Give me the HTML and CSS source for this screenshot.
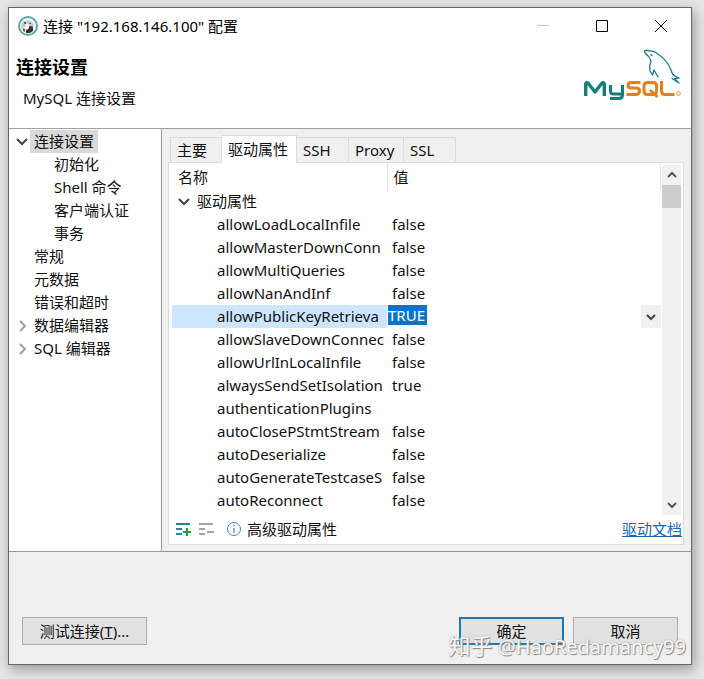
FILE: index.html
```html
<!DOCTYPE html>
<html lang="zh-CN">
<head>
<meta charset="utf-8">
<title>连接 "192.168.146.100" 配置</title>
<link rel="stylesheet" href="styles.css">
</head>
<body>
<div class="window">
  <header class="head">
    <div class="titlebar">
      <svg class="app-icon" viewBox="0 0 20 20" aria-hidden="true">
        <circle cx="10" cy="10" r="9" fill="#f4f7f6" stroke="#5fa9ac" stroke-width="2"/>
        <path d="M4 7l2-2 2 0 3-1 3 2 2 3-1 3-2-2-3 0-2 2-3-1-1 3-1-3z" fill="#c6cccb"/>
        <path d="M9 11l4-1 2 1 0 4-3 2-4 0 0-3z" fill="#3b302c"/>
        <path d="M6 6l2 0 0 2-2 0zM11 7l2 0 0 1-2 0zM5 12l2 1 0 3-2-1z" fill="#6b6462"/>
        <path d="M8 8l3 0 0 4-2 2-2-2z" fill="#fff"/>
      </svg>
      <span class="title">连接 "192.168.146.100" 配置</span>
      <button class="winbtn" aria-label="最小化" disabled><svg viewBox="0 0 14 14"><path d="M1 6.500h12" stroke="#c4c4c4"/></svg></button>
      <button class="winbtn" aria-label="最大化"><svg viewBox="0 0 14 14"><path d="M1.500 1.500h11v11h-11z" stroke="#000"/></svg></button>
      <button class="winbtn" aria-label="关闭"><svg viewBox="0 0 14 14"><path d="M1 1l12 12M13 1L1 13" stroke="#000"/></svg></button>
    </div>
    <div class="banner">
      <div>
        <h1>连接设置</h1>
        <p>MySQL 连接设置</p>
      </div>
      <svg class="logo" viewBox="0 0 100 54" role="img" aria-label="MySQL">
        <g fill="none" stroke="#1d7c82" stroke-width="1.300" stroke-linejoin="round" stroke-linecap="round">
          <path d="M64 7Q61 4 61.500 3Q63 1.500 66 3Q71 2.500 75 6Q81 10 85 16Q88 21 89.500 26Q92 28.500 96 30L91.500 30.500L96 35L89 30.500"/>
          <path d="M64 7Q67 9 68 13Q66 18 67 23L69.500 27L71 22L75 29"/>
          <path d="M68 6.500l1 1"/>
        </g>
        <g fill="none" stroke="#128078" stroke-width="3.400" stroke-linejoin="round">
          <path d="M2.700 48V36Q3 34 5 35L12 44L19 35Q21 34 21.300 36V48"/>
          <path d="M27.500 37V43Q27.500 46 30.500 46H39M39.500 37V47Q39.500 50.500 36 50.500H27" stroke-width="3"/>
        </g>
        <g fill="none" stroke="#e57f1b" stroke-width="3" stroke-linejoin="round">
          <path d="M57.500 34.500H48Q45 34.500 45 37.500Q45 40 48 40H53.500Q56.500 40 56.500 43T53.500 46.500H43.500"/>
          <path d="M64 34.500H70Q73.500 34.500 73.500 38V43Q73.500 46.500 70 46.500H64.500Q61 46.500 61 43V38Q61 34.500 64.500 34.500M67 42L74.500 49"/>
          <path d="M78.500 33V43Q78.500 46.500 82 46.500H91.500"/>
        </g>
        <circle cx="95.500" cy="45.500" r="1.900" fill="none" stroke="#e59a50" stroke-width="1"/>
      </svg>
    </div>
  </header>

  <main class="main">
    <nav class="nav" aria-label="连接设置">
      <ul class="tree">
        <li>
          <a href="#" class="node current"><svg class="twisty" viewBox="0 0 12 12"><path d="M1 3l5 5 5-5" stroke="#444"/></svg><span>连接设置</span></a>
          <ul>
            <li><a href="#" class="node"><span>初始化</span></a></li>
            <li><a href="#" class="node"><span>Shell 命令</span></a></li>
            <li><a href="#" class="node"><span>客户端认证</span></a></li>
            <li><a href="#" class="node"><span>事务</span></a></li>
          </ul>
        </li>
        <li><a href="#" class="node"><i class="twisty"></i><span>常规</span></a></li>
        <li><a href="#" class="node"><i class="twisty"></i><span>元数据</span></a></li>
        <li><a href="#" class="node"><i class="twisty"></i><span>错误和超时</span></a></li>
        <li><a href="#" class="node"><svg class="twisty" viewBox="0 0 12 12"><path d="M4 1l5 5-5 5" stroke="#a0a0a0"/></svg><span>数据编辑器</span></a></li>
        <li><a href="#" class="node"><svg class="twisty" viewBox="0 0 12 12"><path d="M4 1l5 5-5 5" stroke="#a0a0a0"/></svg><span>SQL 编辑器</span></a></li>
      </ul>
    </nav>

    <section class="content">
      <div class="tabs" role="tablist">
        <button class="tab" role="tab">主要</button>
        <button class="tab selected" role="tab" aria-selected="true">驱动属性</button>
        <button class="tab" role="tab">SSH</button>
        <button class="tab wide" role="tab">Proxy</button>
        <button class="tab" role="tab">SSL</button>
      </div>
      <div class="panel">
        <div class="grid-area">
          <table class="props">
            <colgroup><col class="col-name"><col></colgroup>
            <thead><tr><th>名称</th><th>值</th></tr></thead>
            <tbody>
              <tr class="group"><td colspan="2"><div class="group-label"><svg class="twisty" viewBox="0 0 12 12"><path d="M1 3l5 5 5-5" stroke="#444"/></svg>驱动属性</div></td></tr>
              <tr><td>allowLoadLocalInfile</td><td>false</td></tr>
              <tr><td>allowMasterDownConn</td><td>false</td></tr>
              <tr><td>allowMultiQueries</td><td>false</td></tr>
              <tr><td>allowNanAndInf</td><td>false</td></tr>
              <tr class="active"><td><label for="prop-value">allowPublicKeyRetrieva</label></td><td><div class="editor"><input id="prop-value" value="TRUE"><button class="drop" aria-label="展开"><svg class="twisty" viewBox="0 0 12 12"><path d="M2 4l4 4 4-4" stroke="#444"/></svg></button></div></td></tr>
              <tr><td>allowSlaveDownConnec</td><td>false</td></tr>
              <tr><td>allowUrlInLocalInfile</td><td>false</td></tr>
              <tr><td>alwaysSendSetIsolation</td><td>true</td></tr>
              <tr><td>authenticationPlugins</td><td></td></tr>
              <tr><td>autoClosePStmtStream</td><td>false</td></tr>
              <tr><td>autoDeserialize</td><td>false</td></tr>
              <tr><td>autoGenerateTestcaseS</td><td>false</td></tr>
              <tr><td>autoReconnect</td><td>false</td></tr>
            </tbody>
          </table>
          <div class="scrollbar">
            <button aria-label="向上滚动"><svg class="twisty" viewBox="0 0 12 12"><path d="M2 8l4-4 4 4" stroke="#555"/></svg></button>
            <div class="thumb"></div>
            <button class="down" aria-label="向下滚动"><svg class="twisty" viewBox="0 0 12 12"><path d="M2 4l4 4 4-4" stroke="#555"/></svg></button>
          </div>
        </div>
        <div class="tools">
          <button class="tool" aria-label="添加属性"><svg viewBox="0 0 16 16"><path d="M0 3h14M0 8h6M0 13h6" stroke="#2381ad" stroke-width="2"/><path d="M7 11h8M11 7v8" stroke="#22a033" stroke-width="2"/></svg></button>
          <button class="tool" aria-label="删除属性"><svg viewBox="0 0 16 16"><path d="M0 3h14M0 8h6M0 13h6M8 11h7" stroke="#a3a3a3" stroke-width="2"/></svg></button>
          <span class="info"><svg viewBox="0 0 16 16"><circle cx="8" cy="8" r="6.500" fill="none" stroke="#3e86b8"/><path d="M8 7v5M8 4v1.500" stroke="#3e86b8" stroke-width="1.200"/></svg>高级驱动属性</span>
          <a class="doc" href="#">驱动文档</a>
        </div>
      </div>
    </section>
  </main>

  <footer class="foot">
    <button class="btn test">测试连接(<u>T</u>)...</button>
    <button class="btn ok">确定</button>
    <button class="btn">取消</button>
  </footer>
  <div class="watermark"><span class="site">知乎</span> @HaoRedamancy99</div>
</div>
</body>
</html>
```
FILE: styles.css
```css
* { box-sizing: border-box; }
body {
  margin: 0;
  min-height: 100vh;
  padding: 7px 12px 14px 8px;
  display: flex;
  background: #e5e5e5;
  color: #111;
  font: 15px/23px "Noto Sans", "Noto Sans CJK SC", sans-serif;
}
button, input { font: inherit; color: inherit; border: 0; padding: 0; margin: 0; background: none; }
a { color: inherit; text-decoration: none; }
svg { display: block; fill: none; }
h1, p, ul { margin: 0; padding: 0; list-style: none; }

.window {
  position: relative;
  flex: 1;
  min-width: 0;
  display: flex;
  flex-direction: column;
  background: #f0f0f0;
  border: 1px solid #666;
  box-shadow: 2px 4px 12px rgba(0, 0, 0, .35);
}
.head { background: #fff; border-bottom: 1px solid #a0a0a0; height: 121px; }
.titlebar { display: flex; align-items: center; height: 36px; padding: 0 1px 0 9px; }
.app-icon { width: 20px; height: 20px; margin-right: 5px; }
.title { flex: 1; color: #000; }
.winbtn { width: 59px; height: 36px; display: grid; place-items: center; }
.winbtn svg { width: 14px; height: 14px; }
.banner { display: flex; justify-content: space-between; padding: 4px 8px 0 7px; }
.banner h1 { font-size: 18px; line-height: 38px; color: #000; }
.banner p { padding-left: 7px; line-height: 25px; }
.logo { width: 100px; height: 54px; }

.main { flex: 1; display: flex; min-height: 0; border-bottom: 1px solid #969696; }
.nav { width: 153px; padding: 1px 0; background: #fff; border-right: 1px solid #969696; }
.node { display: flex; align-items: center; height: 23px; padding-left: 7px; }
.tree ul .node { padding-left: 41px; }
.node span { padding: 0 4px; }
.node .twisty { margin-right: 2px; }
.current span { background: #d9d9d9; }
.twisty { width: 12px; height: 12px; flex: none; stroke-width: 2; }

.content { flex: 1; min-width: 0; display: flex; flex-direction: column; padding: 6px 7px 6px 6px; }
.tabs { display: flex; align-items: flex-end; height: 27px; padding-left: 2px; }
.tab { min-width: 52px; height: 25px; padding: 0 6px; text-align: left; border: 1px solid #dcdcdc; border-width: 1px 1px 0 0; }
.tab:first-child { border-left-width: 1px; }
.tab.wide { min-width: 55px; }
.tab.selected { position: relative; z-index: 1; min-width: 75px; height: 28px; margin-bottom: -1px; background: #fff; }
.panel { flex: 1; display: flex; flex-direction: column; background: #fff; border: 1px solid #dcdcdc; padding: 0 1px 1px 3px; }
.grid-area { display: flex; flex: 1; }

.props { flex: 1; width: 0; align-self: flex-start; table-layout: fixed; border-collapse: collapse; }
.col-name { width: 215px; }
.props th { height: 27px; padding: 2px 6px 0; text-align: left; font-weight: normal; border-right: 1px solid #e3e3e3; }
.props td { height: 23px; padding: 0 0 0 5px; white-space: nowrap; overflow: hidden; }
.props td:first-child { padding-left: 45px; }
.props .group td { padding-left: 6px; }
.group-label { display: flex; align-items: center; gap: 7px; }
.active td:first-child { background: #cde6fd; }
.props .active td:last-child { padding: 0; }
.editor { display: flex; justify-content: space-between; height: 23px; padding-left: 1px; }
.editor input { width: 39px; height: 20px; background: #0a74cc; color: #fff; outline: 0; border-radius: 0; }
.drop { width: 20px; display: grid; place-items: center; background: #f0f0f0; }
.scrollbar { width: 19px; margin: 2px 1px 0; display: flex; flex-direction: column; background: #f0f0f0; }
.scrollbar button { height: 20px; display: grid; place-items: center; }
.thumb { height: 23px; background: #cdcdcd; }
.scrollbar .down { margin-top: auto; }

.tools { display: flex; align-items: center; height: 28px; padding-left: 4px; }
.tools svg { width: 16px; height: 16px; }
.tool { margin-right: 7px; }
.info { display: flex; align-items: center; gap: 5px; margin-left: 4px; }
.doc { margin-left: auto; color: #1768b5; text-decoration: underline; }

.foot { display: flex; align-items: flex-end; gap: 9px; height: 112px; padding: 0 13px 19px; }
.btn { width: 105px; height: 28px; background: #e1e1e1; border: 1px solid #adadad; }
.test { width: 125px; margin-right: auto; }
.ok { border: 2px solid #1879bd; }
.watermark {
  position: absolute;
  right: 5px;
  bottom: 3px;
  font-size: 20px;
  line-height: 28px;
  color: #f8f8f8;
  text-shadow: 1px 1px 1px #888, 0 0 2px #aaa;
  pointer-events: none;
  white-space: nowrap;
}
.site { font-size: 22px; }
```
